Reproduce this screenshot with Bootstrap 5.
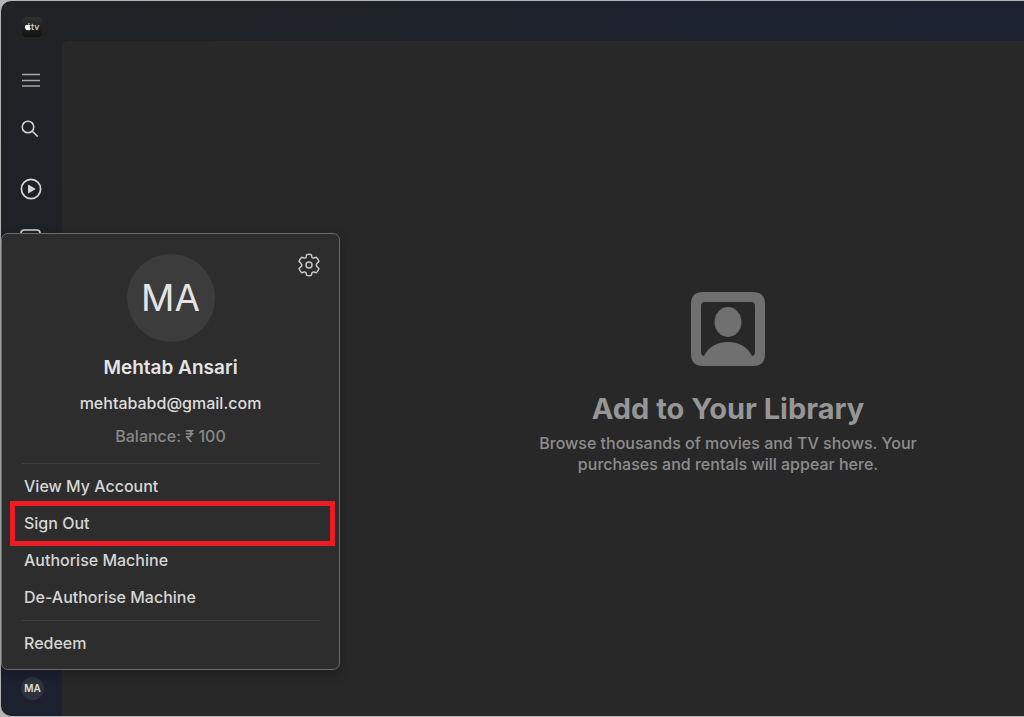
<!DOCTYPE html>
<html lang="en">
<head>
<meta charset="utf-8">
<meta name="viewport" content="width=device-width, initial-scale=1">
<title>Apple TV</title>
<link href="https://cdn.jsdelivr.net/npm/bootstrap@5.3.0/dist/css/bootstrap.min.css" rel="stylesheet">
<style>
  body { background: #b4b6b6; font-family: Inter, "Noto Sans", sans-serif; color: #dedede; font-size: 16px; line-height: 20px; }
  svg { display: block; }
  .app-window { border-radius: 10px 0 0 10px; margin: 1px 0 1px 1px; min-height: calc(100vh - 2px); background: linear-gradient(135deg, #202225 0%, #1e2126 15%, #1b212f 45%, #1a2030 100%); }
  .title-strip { height: 40px; padding: 16px 0 0 21px; }
  .app-logo { width: 20px; height: 20px; }
  .side-rail { width: 61px; flex: none; }
  .rail-btn { background: none; border: 0; padding: 0 2px 0 0; height: 24px; color: #d4d5d7; }
  .rail-gap { margin-top: 28px; }
  .rail-gap-lg { margin-top: 36px; }
  .rail-avatar { width: 23px; height: 23px; padding: 0; background: #2d323c; font-size: 10px; font-weight: 600; line-height: 23px; color: #e0e0e0; margin: 0 0 16px 20px; }
  .library-pane { background: #282828; border-top-left-radius: 6px; padding: 10px 0 0 370px; }
  .library-title { font-size: 29px; line-height: 36px; font-weight: 700; color: #969696; margin: 25px 0 6px; }
  .library-text { font-size: 16px; line-height: 21px; font-weight: 500; color: #8e8e8e; max-width: 400px; }
  .account-panel { position: absolute; left: 0; bottom: 46px; width: 339px; background: #2d2d2d; border: 1px solid #6b6b6b; border-radius: 7px; padding: 20px 8px 7px 12px; box-shadow: 0 4px 12px rgba(0,0,0,.25); }
  .account-summary { padding-right: 4px; }
  .account-avatar { width: 88px; height: 88px; background: #3c3c3c; font-size: 37px; color: #e4e4e4; margin-bottom: 14px; }
  .account-name { font-size: 19px; line-height: 24px; font-weight: 600; color: #e4e4e4; margin-bottom: 13px; }
  .account-mail { font-weight: 500; margin-bottom: 13px; }
  .account-balance { font-weight: 500; color: #888; margin-bottom: 13px; }
  .settings-btn { position: absolute; top: 19px; right: 18px; background: none; border: 0; padding: 0; color: #c8c8c8; }
  .panel-rule { border: 0; border-top: 1px solid #404040; opacity: 1; margin: 4px 11px 4px 8px; }
  .menu-row { display: block; width: 100%; height: 37px; background: none; border: 0; text-align: left; padding: 0 10px 1px; font-weight: 500; color: #d6d6d6; }
  .menu-row.highlighted { outline: 5px solid #ed1c24; outline-offset: -1px; }
</style>
</head>
<body>
<div class="app-window d-flex flex-column position-relative">
  <header class="title-strip">
    <svg class="app-logo" viewBox="0 0 20 20" role="img" aria-label="Apple TV">
      <defs><linearGradient id="tile" x2="0" y2="1"><stop stop-color="#303030"/><stop offset="1" stop-color="#111"/></linearGradient></defs>
      <rect width="20" height="20" rx="4" fill="url(#tile)"/>
      <path d="M6 7.4c.1-1 .8-1.6 1.6-1.700.1.9-.7 1.700-1.600 1.700zM2.900 9.800c0-1.400 1-2.100 1.800-2.100.5 0 .8.3 1.200.3s.8-.3 1.400-.2c.6 0 1 .3 1.300.7-1.200.8-1 2.400.2 2.900-.3.9-1 1.800-1.600 1.800-.5 0-.7-.3-1.200-.3s-.8.3-1.200.3c-.9 0-1.900-1.900-1.900-3.400z" fill="#f4f4f4"/>
      <text x="9" y="13" font-family="Inter" font-size="9" font-weight="500" fill="#ddd">tv</text>
    </svg>
  </header>
  <div class="d-flex flex-grow-1">
    <nav class="side-rail d-flex flex-column" aria-label="Main">
      <button class="rail-btn mt-4 pt-1 d-flex justify-content-center" aria-label="Menu">
        <svg width="20" height="20" viewBox="0 0 20 20" stroke="#a6a7a9" stroke-width="1.4"><path d="M1 5.500h18M1 11.500h18M1 17h18"/></svg>
      </button>
      <button class="rail-btn rail-gap d-flex justify-content-center align-items-center" aria-label="Search">
        <svg width="20" height="20" viewBox="0 0 20 20" fill="none" stroke="currentColor" stroke-width="1.5" stroke-linecap="round"><circle cx="7" cy="8" r="5.800"/><path d="m11.300 12.300 5 4.800"/></svg>
      </button>
      <button class="rail-btn rail-gap-lg d-flex justify-content-center align-items-center" aria-label="Watch now">
        <svg width="22" height="22" viewBox="0 0 22 22"><circle cx="11" cy="11" r="9.600" fill="none" stroke="currentColor" stroke-width="1.700"/><path d="M8 7.200v7.600q0 .7.7.4l6.200-3.600q.8-.6 0-1.200L8.700 6.800Q8 6.500 8 7.200z" fill="currentColor"/></svg>
      </button>
      <button class="rail-btn rail-gap d-flex justify-content-center" aria-label="Library">
        <svg width="22" height="20" viewBox="0 0 22 20" fill="none" stroke="currentColor" stroke-width="1.700"><rect x="1" y="1" width="19" height="17" rx="3"/></svg>
      </button>
      <button class="rail-btn rail-avatar rounded-circle mt-auto" aria-label="Account MA">MA</button>
    </nav>
    <main class="library-pane flex-grow-1 d-flex flex-column align-items-center justify-content-center text-center">
      <svg width="74" height="74" viewBox="0 0 74 74" fill="#707070" aria-hidden="true">
        <path fill-rule="evenodd" d="M12 0h50q12 0 12 12v50q0 12-12 12H12Q0 74 0 62V12Q0 0 12 0zM14 10q-4 0-4 4v46q0 3 3 4C18 54 27 50 37 50s19 4 24 14q3-1 3-4V14q0-4-4-4z"/>
        <ellipse cx="37" cy="30" rx="13.500" ry="15"/>
      </svg>
      <h1 class="library-title">Add to Your Library</h1>
      <p class="library-text mb-0">Browse thousands of movies and TV shows. Your purchases and rentals will appear here.</p>
    </main>
  </div>

  <section class="account-panel" aria-label="Account">
    <button class="settings-btn" aria-label="Settings">
      <svg width="24" height="24" viewBox="0 0 24 24" fill="none" stroke="currentColor" stroke-width="1.500" stroke-linejoin="round"><circle cx="12" cy="12" r="3"/><path d="M9.700 1.600Q12 .9 14.300 1.600L14.900 4Q15.400 5.300 16.800 5L19.300 4.300Q21.200 6 21.900 8.400L20.100 10.200Q18.300 12 20.100 13.800L21.900 15.600Q21.200 18 19.300 19.700L16.800 19Q15.400 18.700 14.900 20L14.300 22.400Q12 23.100 9.700 22.400L9.100 20Q8.600 18.700 7.200 19L4.700 19.700Q2.800 18 2.100 15.600L3.900 13.800Q5.700 12 3.900 10.200L2.100 8.400Q2.800 6 4.700 4.300L7.200 5Q8.600 5.300 9.100 4z"/></svg>
    </button>
    <div class="account-summary d-flex flex-column align-items-center">
      <div class="account-avatar rounded-circle d-flex align-items-center justify-content-center">MA</div>
      <div class="account-name">Mehtab Ansari</div>
      <div class="account-mail">mehtababd@gmail.com</div>
      <div class="account-balance">Balance: ₹ 100</div>
    </div>
    <hr class="panel-rule">
    <button class="menu-row">View My Account</button>
    <button class="menu-row highlighted">Sign Out</button>
    <button class="menu-row">Authorise Machine</button>
    <button class="menu-row">De-Authorise Machine</button>
    <hr class="panel-rule">
    <button class="menu-row">Redeem</button>
  </section>
</div>
<script src="https://cdn.jsdelivr.net/npm/bootstrap@5.3.0/dist/js/bootstrap.bundle.min.js"></script>
</body>
</html>
